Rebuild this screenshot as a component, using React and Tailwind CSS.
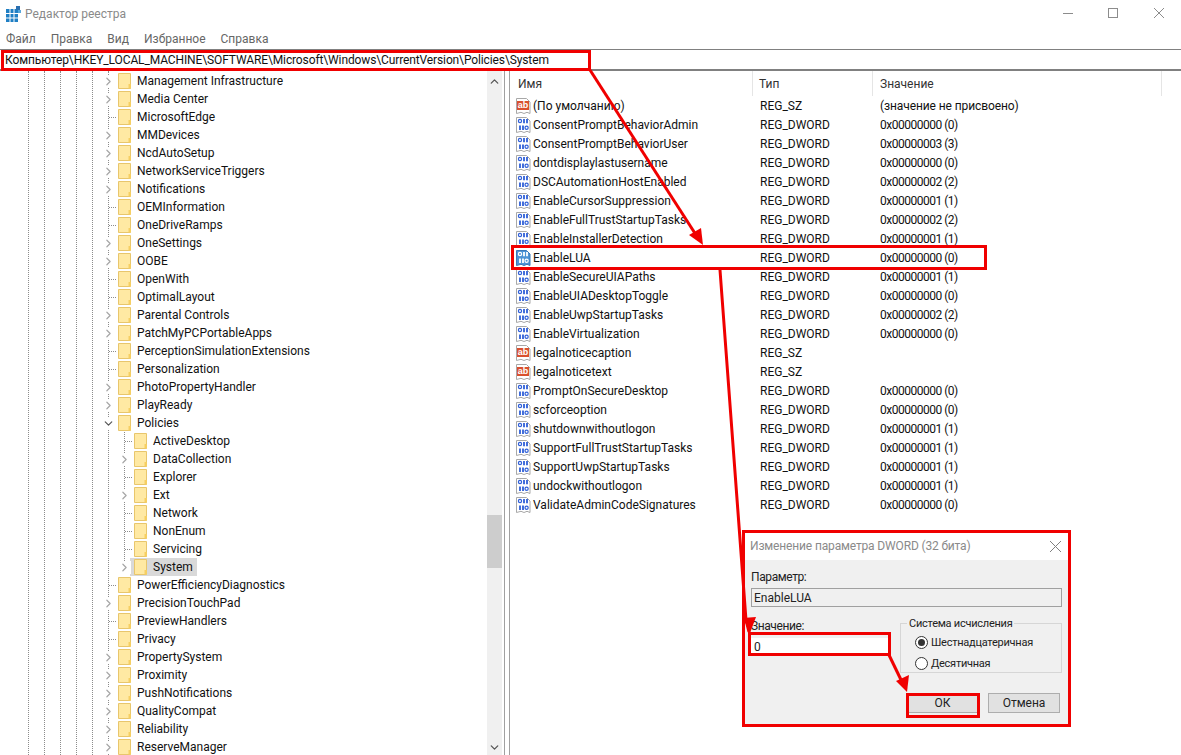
import { ChevronUp, ChevronDown, ChevronRight } from 'lucide-react'

const FONT = { fontFamily: 'Roboto, "Noto Sans", "Liberation Sans", sans-serif' }

const treeTop = [
  ['Management Infrastructure', 1], ['Media Center', 1], ['MicrosoftEdge', 0], ['MMDevices', 1], ['NcdAutoSetup', 1],
  ['NetworkServiceTriggers', 1], ['Notifications', 1], ['OEMInformation', 0], ['OneDriveRamps', 0], ['OneSettings', 1],
  ['OOBE', 1], ['OpenWith', 0], ['OptimalLayout', 0], ['Parental Controls', 1], ['PatchMyPCPortableApps', 1],
  ['PerceptionSimulationExtensions', 0], ['Personalization', 0], ['PhotoPropertyHandler', 1], ['PlayReady', 1],
]
const treePolicies = [
  ['ActiveDesktop', 0], ['DataCollection', 1], ['Explorer', 0], ['Ext', 1], ['Network', 0], ['NonEnum', 0], ['Servicing', 0],
]
const treeBottom = [
  ['PowerEfficiencyDiagnostics', 0], ['PrecisionTouchPad', 1], ['PreviewHandlers', 0], ['Privacy', 0], ['PropertySystem', 1],
  ['Proximity', 1], ['PushNotifications', 1], ['QualityCompat', 1], ['Reliability', 1], ['ReserveManager', 1],
]

const values = [
  ['ab', '(По умолчанию)', 'REG_SZ', '(значение не присвоено)'],
  ['bin', 'ConsentPromptBehaviorAdmin', 'REG_DWORD', '0x00000000 (0)'],
  ['bin', 'ConsentPromptBehaviorUser', 'REG_DWORD', '0x00000003 (3)'],
  ['bin', 'dontdisplaylastusername', 'REG_DWORD', '0x00000000 (0)'],
  ['bin', 'DSCAutomationHostEnabled', 'REG_DWORD', '0x00000002 (2)'],
  ['bin', 'EnableCursorSuppression', 'REG_DWORD', '0x00000001 (1)'],
  ['bin', 'EnableFullTrustStartupTasks', 'REG_DWORD', '0x00000002 (2)'],
  ['bin', 'EnableInstallerDetection', 'REG_DWORD', '0x00000001 (1)'],
  ['sel', 'EnableLUA', 'REG_DWORD', '0x00000000 (0)'],
  ['bin', 'EnableSecureUIAPaths', 'REG_DWORD', '0x00000001 (1)'],
  ['bin', 'EnableUIADesktopToggle', 'REG_DWORD', '0x00000000 (0)'],
  ['bin', 'EnableUwpStartupTasks', 'REG_DWORD', '0x00000002 (2)'],
  ['bin', 'EnableVirtualization', 'REG_DWORD', '0x00000000 (0)'],
  ['ab', 'legalnoticecaption', 'REG_SZ', ''],
  ['ab', 'legalnoticetext', 'REG_SZ', ''],
  ['bin', 'PromptOnSecureDesktop', 'REG_DWORD', '0x00000000 (0)'],
  ['bin', 'scforceoption', 'REG_DWORD', '0x00000000 (0)'],
  ['bin', 'shutdownwithoutlogon', 'REG_DWORD', '0x00000001 (1)'],
  ['bin', 'SupportFullTrustStartupTasks', 'REG_DWORD', '0x00000001 (1)'],
  ['bin', 'SupportUwpStartupTasks', 'REG_DWORD', '0x00000001 (1)'],
  ['bin', 'undockwithoutlogon', 'REG_DWORD', '0x00000001 (1)'],
  ['bin', 'ValidateAdminCodeSignatures', 'REG_DWORD', '0x00000000 (0)'],
]

function RegeditIcon() {
  return (
    <svg width="16" height="16" viewBox="0 0 16 16" className="shrink-0">
      <path d="M0 3h12v13H0z" fill="#1f7fc4" />
      <path d="M4 3v13M8 3v13M0 7.5h12M0 12h12" stroke="#fff" strokeWidth="1" />
      <path d="M10 0h4v4h-4z" fill="#2a6fb0" />
      <path d="M12 4h3v3h-3z" fill="#58a8dc" />
    </svg>
  )
}

function Folder() {
  return (
    <svg width="14" height="16" viewBox="0 0 14 16" className="shrink-0">
      <path d="M.5.5h12v15H.5z" fill="#ffe9a3" stroke="#e8c66c" />
      <path d="M10.5 11h2.5v4.5h-2.5z" fill="#f6cf62" />
    </svg>
  )
}

function ValueIcon({ kind }) {
  const page = 'M.5.5h10l3.5 3.5v11.5l-3-1.2-3 1.2-3-1.2-4.5 1.2z'
  if (kind === 'ab') {
    return (
      <svg width="15" height="16" viewBox="0 0 15 16" className="shrink-0">
        <path d={page} fill="#fff" stroke="#a8a8a8" />
        <rect x="1" y="3" width="12" height="9" fill="#d9502e" />
        <text x="1.8" y="10.4" fontSize="9" fontWeight="700" fill="#fff" style={{ fontFamily: '"Liberation Sans", sans-serif' }}>ab</text>
      </svg>
    )
  }
  const sel = kind === 'sel'
  const c = sel ? '#fff' : '#2f5fd8'
  return (
    <svg width="15" height="16" viewBox="0 0 15 16" className="shrink-0">
      <path d={page} fill={sel ? '#4d94d6' : '#fff'} stroke={sel ? '#3a78b8' : '#a8a8a8'} />
      <circle cx="4" cy="4" r="1.6" fill="none" stroke={c} strokeWidth="1.2" />
      <path d="M8 2v4.2M11 2v4.2M4 8.5v4.4M7 8.5v4.4" stroke={c} strokeWidth="1.8" />
      <circle cx="10.6" cy="10.7" r="1.6" fill="none" stroke={c} strokeWidth="1.2" />
    </svg>
  )
}

function TreeRow({ name, expander, level = 1, open, selected }) {
  return (
    <div className={`flex items-center h-[18px] ${level === 2 ? 'pl-[116px]' : 'pl-[100px]'}`}>
      <div className="w-4 h-[18px] flex items-center justify-center shrink-0 relative">
        {expander ? (
          <div className="bg-white">
            {open ? (
              <ChevronDown size={13} strokeWidth={2.2} className="text-[#555]" />
            ) : (
              <ChevronRight size={13} strokeWidth={2.2} className="text-[#a6a6a6]" />
            )}
          </div>
        ) : (
          <span className="ml-[9px] w-[7px] border-t border-dotted border-[#8c8c8c]" />
        )}
      </div>
      <div className={`flex items-center h-[18px] ${selected ? '-ml-[2px] pl-1 pr-1 bg-[#d9d9d9]' : 'ml-[2px]'}`}>
        <Folder />
        <span className="ml-[5px] text-[12px] leading-none text-[#111] whitespace-nowrap">{name}</span>
      </div>
    </div>
  )
}

function Guide({ className }) {
  return <div className={`absolute w-0 border-l border-dotted border-[#8c8c8c] ${className}`} />
}

function Tree() {
  return (
    <div className="relative w-[487px] shrink-0 pt-px overflow-hidden">
      <Guide className="left-[28px] top-0 bottom-0" />
      <Guide className="left-[44px] top-0 bottom-0" />
      <Guide className="left-[60px] top-0 bottom-0" />
      <Guide className="left-[76px] top-0 bottom-0" />
      <Guide className="left-[92px] top-0 bottom-0" />
      <Guide className="left-[108px] top-0 bottom-0" />
      <Guide className="left-[124px] top-[354px] h-[140px]" />
      <div className="relative">
        {treeTop.map(([n, e]) => <TreeRow key={n} name={n} expander={e} />)}
        <TreeRow name="Policies" expander open />
        {treePolicies.map(([n, e]) => <TreeRow key={n} name={n} expander={e} level={2} />)}
        <TreeRow name="System" expander level={2} selected />
        {treeBottom.map(([n, e]) => <TreeRow key={n} name={n} expander={e} />)}
      </div>
    </div>
  )
}

function TreeScrollbar() {
  return (
    <div className="w-[15px] shrink-0 bg-[#f0f0f0] flex flex-col items-center">
      <ChevronUp size={13} strokeWidth={2.4} className="mt-[4px] text-[#555]" />
      <div className="mt-[427px] w-full h-[53px] bg-[#cdcdcd]" />
      <div className="flex-1" />
      <ChevronDown size={13} strokeWidth={2.4} className="mb-[1px] text-[#555]" />
    </div>
  )
}

function ValueList() {
  return (
    <div className="flex-1 min-w-0 text-[12px] text-[#111]">
      <div className="flex h-[25px] items-center text-[#333]">
        <div className="w-[243px] pl-2 h-full flex items-center border-r border-[#e5e5e5]">Имя</div>
        <div className="w-[120px] pl-[6px] h-full flex items-center border-r border-[#e5e5e5]">Тип</div>
        <div className="w-[289px] pl-[7px] h-full flex items-center border-r border-[#e5e5e5]">Значение</div>
      </div>
      {values.map(([kind, name, type, val]) => (
        <div key={name} className="flex h-[19px] items-center whitespace-nowrap leading-none">
          <div className="w-[243px] pl-[6px] flex items-center">
            <ValueIcon kind={kind} />
            <span className="ml-[2px]">{name}</span>
          </div>
          <div className="w-[120px] pl-[7px]">{type}</div>
          <div className={`pl-[7px] ${val.startsWith('0x') ? 'tracking-[-0.5px]' : 'tracking-[-0.1px]'}`}>{val}</div>
        </div>
      ))}
    </div>
  )
}

function Dialog() {
  return (
    <div className="absolute left-[745px] top-[532px] w-[323px] h-[192px] bg-[#f0f0f0] text-[12px] text-[#222] leading-none">
      <div className="h-[28px] bg-white flex items-center justify-between pl-[5px] pr-[7px] text-[#8a8a8a]">
        <span className="tracking-[-0.15px]">Изменение параметра DWORD (32 бита)</span>
        <svg width="11" height="11" viewBox="0 0 11 11">
          <path d="M0 0 11 11M11 0 0 11" stroke="#808080" strokeWidth="1" />
        </svg>
      </div>
      <div className="px-[6px]">
        <div className="mt-[11px] tracking-[-0.4px]">Параметр:</div>
        <div className="mt-[5px] h-[19px] bg-[#f0f0f0] border border-[#a0a0a0] flex items-center pl-[2px]">EnableLUA</div>
        <div className="flex mt-[11px]">
          <div className="w-[138px] shrink-0 pt-[2px]">
            <div className="tracking-[-0.4px]">Значение:</div>
            <div className="mt-[6px] h-[18px] bg-white flex items-center pl-[3px]">0</div>
          </div>
          <fieldset className="ml-[11px] w-[162px] h-[55px] border border-[#d6d6d6] pl-[14px] pr-0 text-[11px] tracking-[-0.25px]">
            <legend className="ml-[-8px] px-[2px] leading-none text-[#222]">Система исчисления</legend>
            <div className="flex items-center h-[21px] mt-[3px]">
              <span className="w-[13px] h-[13px] rounded-full border border-[#333] bg-white flex items-center justify-center">
                <span className="w-[7px] h-[7px] rounded-full bg-[#333]" />
              </span>
              <span className="ml-[3px]">Шестнадцатеричная</span>
            </div>
            <div className="flex items-center h-[21px]">
              <span className="w-[13px] h-[13px] rounded-full border border-[#333] bg-white" />
              <span className="ml-[3px]">Десятичная</span>
            </div>
          </fieldset>
        </div>
        <div className="flex justify-end gap-[10px] mt-[20px] pr-[2px]">
          <div className="w-[71px] h-[20px] bg-[#e1e1e1] border border-[#adadad] flex items-center justify-center">ОК</div>
          <div className="w-[72px] h-[20px] bg-[#e1e1e1] border border-[#adadad] flex items-center justify-center">Отмена</div>
        </div>
      </div>
    </div>
  )
}

function Annotations() {
  const red = '#f00000'
  return (
    <>
      <div className="absolute left-[1px] top-[50px] w-[590px] h-[21px] border-[3px] border-[#f00000]" />
      <div className="absolute left-[511px] top-[245px] w-[476px] h-[25px] border-[3px] border-[#f00000]" />
      <div className="absolute left-[742px] top-[530px] w-[329px] h-[197px] border-[3px] border-[#f00000]" />
      <div className="absolute left-[748px] top-[632px] w-[143px] h-[24px] border-[3px] border-[#f00000]" />
      <div className="absolute left-[906px] top-[693px] w-[74px] h-[25px] border-[3px] border-[#f00000]" />
      <svg width="1181" height="755" viewBox="0 0 1181 755" className="absolute left-0 top-0 pointer-events-none">
        <path d="M590 70 698 238" stroke={red} strokeWidth="3" fill="none" />
        <path d="M703 245 689 235 701 228z" fill={red} />
        <path d="M720 270 746 620 749 632" stroke={red} strokeWidth="3" fill="none" />
        <path d="M750 633 743 618 756 617z" fill={red} />
        <path d="M889 655 904 686" stroke={red} strokeWidth="3" fill="none" />
        <path d="M907 692 896 681 909 675z" fill={red} />
      </svg>
    </>
  )
}

export default function App() {
  return (
    <div className="relative w-[1181px] h-[755px] overflow-hidden bg-white flex flex-col" style={FONT}>
      <div className="h-[28px] flex items-center pl-[6px] shrink-0">
        <RegeditIcon />
        <span className="ml-[3px] text-[12px] text-[#8a8a8a]">Редактор реестра</span>
        <div className="ml-auto mb-[2px] flex items-center">
          <div className="w-[10px] mr-[35px] border-t border-[#8c8c8c]" />
          <div className="w-[10px] h-[10px] mr-[36px] border border-[#8c8c8c]" />
          <svg width="10" height="10" viewBox="0 0 10 10" className="mr-[17px]">
            <path d="M0 0 10 10M10 0 0 10" stroke="#8c8c8c" strokeWidth="1" />
          </svg>
        </div>
      </div>
      <div className="h-[21px] flex items-center gap-[15px] pl-[6px] pt-px text-[12px] text-[#666] shrink-0">
        <span>Файл</span>
        <span>Правка</span>
        <span>Вид</span>
        <span>Избранное</span>
        <span>Справка</span>
      </div>
      <div className="h-[22px] shrink-0 border-t border-[#808080] border-b-2 flex items-center pl-[5px] text-[12px] text-[#111] tracking-[-0.12px]">
        Компьютер\HKEY_LOCAL_MACHINE\SOFTWARE\Microsoft\Windows\CurrentVersion\Policies\System
      </div>
      <div className="flex-1 flex min-h-0">
        <Tree />
        <TreeScrollbar />
        <div className="w-[6px] ml-[2px] shrink-0 border-x border-[#a0a0a0]" />
        <ValueList />
      </div>
      <Dialog />
      <Annotations />
    </div>
  )
}
